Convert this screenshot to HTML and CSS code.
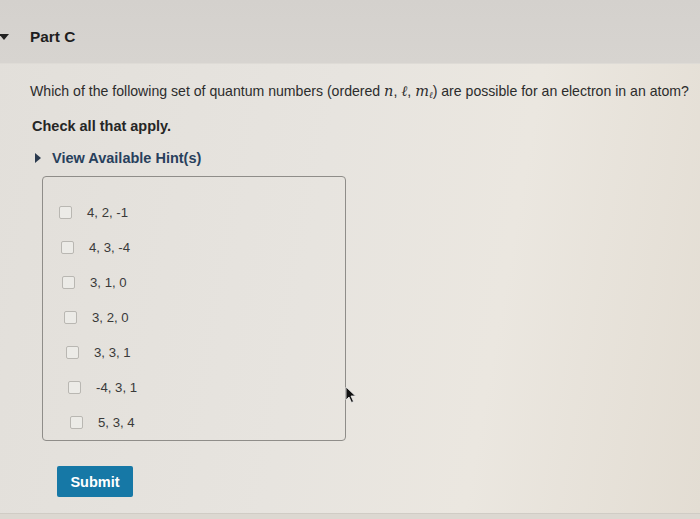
FILE: index.html
```html
<!DOCTYPE html>
<html>
<head>
<meta charset="utf-8">
<link rel="stylesheet" href="styles.css">
</head>
<body>
<div class="page">
  <header class="part-head">
    <span class="caret-down"></span>
    <span class="part-title">Part C</span>
  </header>
  <main class="content">
    <p class="question">Which of the following set of quantum numbers (ordered <i class="m">n</i>, <i class="m">ℓ</i>, <i class="m">m<sub>ℓ</sub></i>) are possible for an electron in an atom?</p>
    <p class="instr">Check all that apply.</p>
    <div class="hint"><span class="caret-right"></span><span>View Available Hint(s)</span></div>
    <div class="choices">
      <label class="choice"><span class="box"></span><span>4, 2, -1</span></label>
      <label class="choice"><span class="box"></span><span>4, 3, -4</span></label>
      <label class="choice"><span class="box"></span><span>3, 1, 0</span></label>
      <label class="choice"><span class="box"></span><span>3, 2, 0</span></label>
      <label class="choice"><span class="box"></span><span>3, 3, 1</span></label>
      <label class="choice"><span class="box"></span><span>-4, 3, 1</span></label>
      <label class="choice"><span class="box"></span><span>5, 3, 4</span></label>
      <svg class="cursor" width="12" height="18" viewBox="0 0 12 18"><path d="M1 1 L1 14 L4 11 L6.5 16.5 L8.5 15.5 L6 10 L10.5 10 Z" fill="#111" stroke="#eee" stroke-width="0.8"/></svg>
    </div>
    <button class="submit">Submit</button>
  </main>
  <div class="bottom-line"></div>
</div>
</body>
</html>
```
FILE: styles.css
```css
html, body {
  margin: 0;
  padding: 0;
}
body {
  width: 700px;
  height: 519px;
  overflow: hidden;
  background: #e5e1db;
  font-family: "Liberation Sans", Arial, sans-serif;
  color: #2e2e2e;
}
.page {
  position: relative;
  height: 519px;
  background: linear-gradient(100deg, #e2dfda 0%, #e7e4df 45%, #ebe7e0 70%, #e3ddd3 100%);
}
.part-head {
  height: 64px;
  background: linear-gradient(180deg, #d4d1cd 0%, #d7d4d0 100%);
  border-bottom: 1px solid #dedbd6;
  display: flex;
  align-items: center;
  padding-top: 10px;
  box-sizing: border-box;
}
.caret-down {
  width: 0;
  height: 0;
  border-left: 5px solid transparent;
  border-right: 5px solid transparent;
  border-top: 6px solid #222;
  margin-left: -1px;
  margin-right: 21px;
}
.part-title {
  font-size: 15.4px;
  font-weight: bold;
  color: #1e1e1e;
}
.content {
  padding: 0 0 0 30px;
}
.question {
  margin: 18px 0 0;
  font-size: 14.1px;
  line-height: 18px;
  color: #2c2c2c;
  white-space: nowrap;
}
.m {
  font-family: "DejaVu Serif", "Liberation Serif", serif;
  font-size: 14.5px;
}
.m sub {
  font-size: 9px;
  vertical-align: -2px;
}
.instr {
  margin: 13px 0 0 2px;
  font-size: 14.5px;
  font-weight: bold;
  line-height: 18px;
  color: #262626;
}
.hint {
  margin: 15px 0 0 5px;
  display: flex;
  align-items: center;
  font-size: 14.5px;
  font-weight: bold;
  color: #28405c;
}
.caret-right {
  width: 0;
  height: 0;
  border-top: 5px solid transparent;
  border-bottom: 5px solid transparent;
  border-left: 6px solid #2a3a4e;
  margin-right: 11px;
}
.choices {
  position: relative;
  margin: 10px 0 0 12px;
  width: 304px;
  height: 265px;
  box-sizing: border-box;
  border: 1px solid #8f8d89;
  border-radius: 4px;
  padding: 28px 0 0 16px;
  display: flex;
  flex-direction: column;
  gap: 20px;
}
.choice {
  display: flex;
  align-items: center;
  height: 15px;
  font-size: 13.2px;
  color: #3a3a3a;
}
.choice:nth-child(2) { padding-left: 2px; }
.choice:nth-child(3) { padding-left: 3px; }
.choice:nth-child(4) { padding-left: 5px; }
.choice:nth-child(5) { padding-left: 7px; }
.choice:nth-child(6) { padding-left: 9px; }
.choice:nth-child(7) { padding-left: 11px; }
.box {
  width: 13px;
  height: 13px;
  box-sizing: border-box;
  border: 1px solid #b9b7b2;
  border-radius: 2px;
  background: #ecebe7;
  margin-right: 15px;
}
.cursor {
  position: absolute;
  left: 302px;
  top: 209px;
}
.submit {
  margin: 25px 0 0 27px;
  width: 76px;
  height: 31px;
  border: none;
  border-radius: 2px;
  background: #1678a6;
  color: #fff;
  font-family: "Liberation Sans", Arial, sans-serif;
  font-size: 14.5px;
  font-weight: bold;
  padding: 0;
}
.bottom-line {
  position: absolute;
  left: 0;
  right: 0;
  top: 513px;
  height: 6px;
  background: #dcd8d1;
  border-top: 1px solid #d0ccc5;
}
```
